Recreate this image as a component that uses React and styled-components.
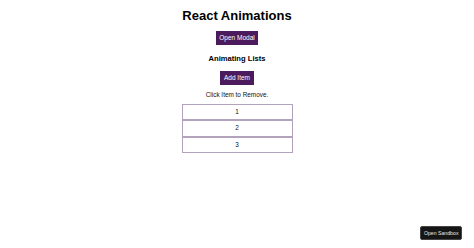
import React, { useState } from "react";
import styled, { createGlobalStyle } from "styled-components";

const GlobalStyle = createGlobalStyle`
  html, body {
    margin: 0;
    padding: 0;
    background: #ffffff;
  }
  body {
    font-family: "Liberation Sans", Arial, Helvetica, sans-serif;
    color: #000;
  }
`;

const Page = styled.div`
  position: relative;
  width: 474px;
  height: 248px;
  display: flex;
  flex-direction: column;
  align-items: center;
  text-align: center;
  font-size: 6.4px;
`;

const Title = styled.h1`
  margin: 7.6px 0 0;
  font-size: 13px;
  line-height: 15px;
  font-weight: bold;
`;

const Button = styled.button`
  margin-top: ${(p) => p.$top}px;
  border: none;
  border-radius: 0;
  background: #4b1b5d;
  color: #ffffff;
  font-family: inherit;
  font-size: 6.5px;
  line-height: 8px;
  padding: 3px 3.5px;
  cursor: pointer;
`;

const SubTitle = styled.h3`
  margin: 9px 0 0;
  font-size: 7.6px;
  line-height: 9px;
  font-weight: bold;
`;

const Hint = styled.p`
  margin: 6px 0 0;
  font-size: 6.4px;
  line-height: 8px;
  color: #111;
`;

const List = styled.ul`
  list-style: none;
  margin: 5.5px 0 0;
  padding: 0;
  width: 111px;
`;

const Item = styled.li`
  height: 14.4px;
  line-height: 14.4px;
  border: 1px solid #b3a2bb;
  font-size: 6.4px;
  color: #111;
  cursor: pointer;
`;

const SandboxButton = styled.button`
  position: absolute;
  right: 12px;
  bottom: 8px;
  background: #151515;
  color: #e8e8e8;
  border: 0.5px solid #444;
  border-radius: 2px;
  font-family: inherit;
  font-size: 5.2px;
  line-height: 7px;
  padding: 2.5px 2.5px;
`;

export default function App() {
  const [items, setItems] = useState([1, 2, 3]);

  return (
    <>
      <GlobalStyle />
      <Page>
        <Title>React Animations</Title>
        <Button $top={8}>Open Modal</Button>
        <SubTitle>Animating Lists</SubTitle>
        <Button $top={8} onClick={() => setItems([...items, items.length + 1])}>
          Add Item
        </Button>
        <Hint>Click Item to Remove.</Hint>
        <List>
          {items.map((n, i) => (
            <Item key={n} onClick={() => setItems(items.filter((_, j) => j !== i))}>
              {n}
            </Item>
          ))}
        </List>
        <SandboxButton>Open Sandbox</SandboxButton>
      </Page>
    </>
  );
}
